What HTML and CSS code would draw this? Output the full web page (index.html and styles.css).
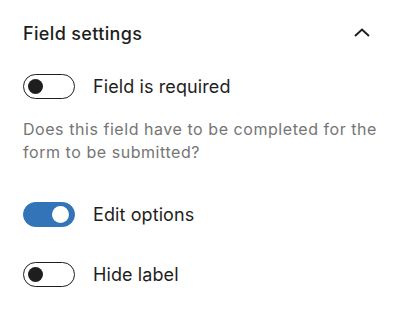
FILE: index.html
```html
<!DOCTYPE html>
<html>
<head>
<meta charset="utf-8">
<link rel="stylesheet" href="styles.css">
</head>
<body>
<div class="panel">
  <div class="header">
    <span class="title">Field settings</span>
    <svg class="chevron" width="16" height="9" viewBox="0 0 16 9"><path d="M1 8 L8 1.5 L15 8" fill="none" stroke="#1e1e1e" stroke-width="2"/></svg>
  </div>
  <div class="row first">
    <span class="toggle off"><span class="knob"></span></span>
    <span class="label">Field is required</span>
  </div>
  <p class="help">Does this field have to be completed for the form to be submitted?</p>
  <div class="row second">
    <span class="toggle on"><span class="knob"></span></span>
    <span class="label">Edit options</span>
  </div>
  <div class="row third">
    <span class="toggle off"><span class="knob"></span></span>
    <span class="label">Hide label</span>
  </div>
</div>
</body>
</html>
```
FILE: styles.css
```css
html, body { margin: 0; padding: 0; background: #fff; }
body { font-family: Inter, "Noto Sans", sans-serif; color: #1e1e1e; }
.panel { width: 400px; height: 329px; box-sizing: border-box; padding: 22px 23px 0 23px; }
.header { display: flex; align-items: center; justify-content: space-between; height: 22px; padding-right: 7px; }
.title { font-size: 18px; font-weight: 500; letter-spacing: 0.35px; }
.chevron { display: block; margin-top: -2px; }
.row { display: flex; align-items: center; height: 25px; }
.row.first { margin-top: 30px; }
.row.second { margin-top: 38px; }
.row.third { margin-top: 35px; }
.toggle { box-sizing: border-box; width: 52px; height: 25px; border-radius: 13px; position: relative; flex: none; }
.toggle.off { border: 1.5px solid #1e1e1e; background: #fff; }
.toggle.on { background: #3373b8; border: 1.5px solid #3373b8; }
.knob { position: absolute; top: 3.5px; width: 15px; height: 15px; border-radius: 50%; }
.toggle.off .knob { left: 3.5px; background: #1e1e1e; }
.toggle.on .knob { left: 28px; top: 2.5px; width: 17px; height: 17px; background: #fff; }
.label { margin-left: 18px; font-size: 18px; letter-spacing: 0.1px; }
.help { margin: 19px 0 0 0; font-size: 16px; line-height: 23px; letter-spacing: 0.55px; color: #757575; }
```
